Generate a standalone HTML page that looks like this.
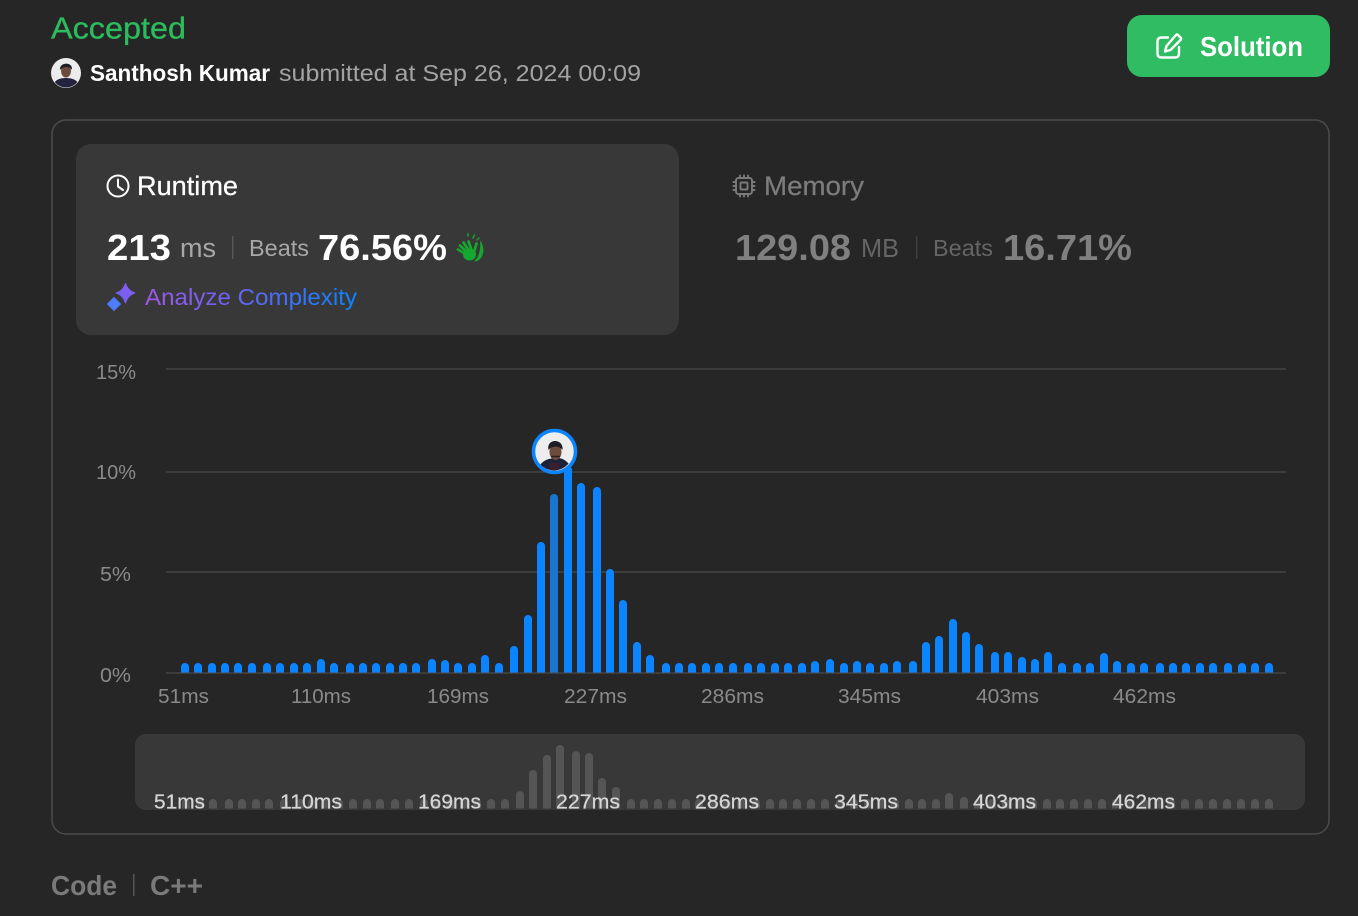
<!DOCTYPE html>
<html lang="en">
<head>
<meta charset="utf-8">
<title>Accepted submission</title>
<style>
html,body{margin:0;padding:0;background:#262626;width:1358px;height:916px;overflow:hidden}
svg{display:block}
text{font-family:"Liberation Sans",sans-serif}
.b{font-weight:700}
.ax{font-size:20.5px;fill:#8a8a8a}
.mi{font-size:20.5px;fill:#d6d6d6;stroke:#d6d6d6;stroke-width:.25px}
</style>
</head>
<body>
<svg width="1358" height="916" viewBox="0 0 1358 916" xmlns="http://www.w3.org/2000/svg">
<defs>
<linearGradient id="g" gradientUnits="userSpaceOnUse" x1="108" y1="0" x2="357" y2="0">
<stop offset="0" stop-color="#b553e8"/><stop offset=".5" stop-color="#6a62ee"/><stop offset="1" stop-color="#0a84ff"/>
</linearGradient>
<linearGradient id="s" gradientUnits="userSpaceOnUse" x1="116" y1="303" x2="135" y2="283">
<stop offset="0" stop-color="#6c62f2"/><stop offset="1" stop-color="#8a5cee"/>
</linearGradient>
<clipPath id="c1"><rect x="160" y="400" width="1130" height="272.5"/></clipPath>
<clipPath id="c2"><rect x="135" y="734" width="1170" height="74.5"/></clipPath>
<clipPath id="a1"><circle cx="554" cy="451.5" r="19"/></clipPath>
<clipPath id="a2"><circle cx="66" cy="73" r="14.5"/></clipPath>
</defs>

<rect width="1358" height="916" fill="#262626"/>

<!-- header -->
<text x="51" y="38.500" font-size="31" fill="#2cbb5d" stroke="#2cbb5d" stroke-width=".35" textLength="135" lengthAdjust="spacingAndGlyphs">Accepted</text>
<circle cx="66" cy="73" r="15" fill="#ececec"/>
<g clip-path="url(#a2)">
<path d="M52 90C53 80 59 78 66 78S79 80 81 90Z" fill="#23233f"/>
<ellipse cx="66" cy="71" rx="5" ry="6.5" fill="#6e4c3c"/>
<path d="M60 70C59 62 73 61 72 70C70 66 63 66 60 70Z" fill="#1e1e26"/>
</g>
<text x="90" y="81" font-size="23.500" class="b" fill="#fff" textLength="180" lengthAdjust="spacingAndGlyphs">Santhosh Kumar</text>
<text x="279" y="81" font-size="23.500" fill="#a3a3a3" textLength="362" lengthAdjust="spacingAndGlyphs">submitted at Sep 26, 2024 00:09</text>

<!-- solution button -->
<rect x="1127" y="15" width="203" height="62" rx="15" fill="#2fbc62"/>
<path d="M1168 37.500H1161.500Q1157.500 37.500 1157.500 41.500V53.500Q1157.500 57.500 1161.500 57.500H1175Q1179 57.500 1179 53.500V47" fill="none" stroke="#fff" stroke-width="2.400" stroke-linecap="round"/>
<path d="M1177.500 34.500L1181 38Q1181.500 39 1180.500 40L1170.500 50L1165 51.500L1166.500 46L1176 35Q1176.800 34 1177.500 34.500Z" fill="none" stroke="#fff" stroke-width="2.400" stroke-linejoin="round"/>
<text x="1200" y="56" font-size="28" class="b" fill="#fff" textLength="103" lengthAdjust="spacingAndGlyphs">Solution</text>

<!-- card -->
<rect x="52" y="120" width="1277" height="714" rx="14" fill="#262626" stroke="#4c4c4c" stroke-width="1.500"/>
<rect x="76" y="144" width="603" height="191" rx="15" fill="#383838"/>

<!-- runtime -->
<circle cx="118" cy="186" r="10.500" fill="none" stroke="#fff" stroke-width="2"/>
<path d="M118 179.500V186.500L123 190" fill="none" stroke="#fff" stroke-width="2" stroke-linecap="round" stroke-linejoin="round"/>
<text x="137" y="195" font-size="27" fill="#fff" stroke="#fff" stroke-width=".25" textLength="101" lengthAdjust="spacingAndGlyphs">Runtime</text>
<text x="107" y="260" font-size="36" class="b" fill="#fff" textLength="64" lengthAdjust="spacingAndGlyphs">213</text>
<text x="180" y="257" font-size="25.500" fill="#a8a8a8" textLength="36" lengthAdjust="spacingAndGlyphs">ms</text>
<rect x="232" y="236" width="1.500" height="23" fill="#575757"/>
<text x="249" y="256" font-size="23.500" fill="#a8a8a8" textLength="60" lengthAdjust="spacingAndGlyphs">Beats</text>
<text x="318" y="260" font-size="36" class="b" fill="#fff" textLength="129" lengthAdjust="spacingAndGlyphs">76.56%</text>

<!-- clap icon -->
<g stroke="#15a82f" fill="none" stroke-linecap="round">
<path d="M466 254L458 249.500M467 252L460 245.500M469 251L463.500 242.500M471.500 250L468.500 241.500" stroke-width="2.700"/>
<path d="M474 252L476.500 243.500" stroke-width="2.700"/>
<path d="M468 236V233.500M473 238L474.500 235M477 240L479 238" stroke-width="1.400"/>
</g>
<ellipse cx="469.500" cy="254.500" rx="6.500" ry="6" fill="#15a82f"/>
<path d="M480 240.500C484 245 485 254 480 259C478 261 476 261.500 474 261.500C479 257 481 250 480 240.500Z" fill="#15a82f"/>

<!-- sparkle -->
<path d="M125.500 283.500C127 288 130 291.500 134.800 293C130 294.500 127 298 125.500 303C124 298 121 294.500 116.200 293C121 291.500 124 288 125.500 283.500Z" fill="url(#s)" stroke="url(#s)" stroke-width="1" stroke-linejoin="round"/>
<path d="M114 297.500L120.500 304L114 310.500L107.500 304Z" fill="#4f7bff" stroke="#4f7bff" stroke-width="1" stroke-linejoin="round"/>
<text x="145" y="305" font-size="23.500" fill="url(#g)" textLength="212" lengthAdjust="spacingAndGlyphs">Analyze Complexity</text>

<!-- memory -->
<g fill="none" stroke="#7a7a7a" stroke-width="1.900">
<rect x="736" y="178" width="16" height="16" rx="2.500"/>
<rect x="740.500" y="182.500" width="7" height="7" rx="1"/>
<path d="M740 175.500V178M744 175.500V178M748 175.500V178M740 194V196.500M744 194V196.500M748 194V196.500M733.500 182H736M733.500 186H736M733.500 190H736M752 182H754.500M752 186H754.500M752 190H754.500" stroke-linecap="round"/>
</g>
<text x="764" y="195" font-size="27" fill="#7c7c7c" stroke="#7c7c7c" stroke-width=".25" textLength="100" lengthAdjust="spacingAndGlyphs">Memory</text>
<text x="735" y="260" font-size="36" class="b" fill="#808080" textLength="116" lengthAdjust="spacingAndGlyphs">129.08</text>
<text x="861" y="257" font-size="25.500" fill="#656565" textLength="38" lengthAdjust="spacingAndGlyphs">MB</text>
<rect x="916" y="236" width="1.500" height="23" fill="#3f3f3f"/>
<text x="933" y="256" font-size="23.500" fill="#656565" textLength="60" lengthAdjust="spacingAndGlyphs">Beats</text>
<text x="1003" y="260" font-size="36" class="b" fill="#808080" textLength="129" lengthAdjust="spacingAndGlyphs">16.71%</text>

<!-- grid -->
<g stroke="#4a4a4a" stroke-width="1.300">
<path d="M166 369H1286M166 472H1286M166 572H1286M166 673H1286"/>
</g>
<text x="96" y="379" class="ax" textLength="40" lengthAdjust="spacingAndGlyphs">15%</text>
<text x="96" y="479" class="ax" textLength="40" lengthAdjust="spacingAndGlyphs">10%</text>
<text x="100" y="581" class="ax" textLength="31" lengthAdjust="spacingAndGlyphs">5%</text>
<text x="100" y="682" class="ax" textLength="31" lengthAdjust="spacingAndGlyphs">0%</text>

<!-- main bars -->
<g clip-path="url(#c1)" fill="none" stroke="#0a84ff" stroke-width="8" stroke-linecap="round">
<path d="M185 667V680M198 667V680M212 667V680M225 667V680M238 667V680M252 667V680M267 667V680M280 667V680M294 667V680M307 667V680M321 663V680M334 667V680M350 667V680M363 667V680M376 667V680M390 667V680M403 667V680M416 667V680M432 663V680M445 664V680M458 667V680M472 667V680M485 659V680M499 667V680M514 650V680M528 619V680M541 546V680M568 470V680M581 487V680M597 491V680M610 573V680M623 604V680M637 646V680M650 659V680M666 667V680M679 667V680M692 667V680M706 667V680M719 667V680M733 667V680M748 667V680M761 667V680M775 667V680M788 667V680M802 667V680M815 665V680M830 663V680M844 667V680M857 665V680M870 667V680M884 667V680M897 665V680M913 665V680M926 646V680M939 640V680M953 623V680M966 636V680M979 648V680M995 656V680M1008 656V680M1022 661V680M1035 663V680M1048 656V680M1062 667V680M1077 667V680M1090 667V680M1104 657V680M1117 665V680M1131 667V680M1144 667V680M1160 667V680M1173 667V680M1186 667V680M1200 667V680M1213 667V680M1228 667V680M1242 667V680M1255 667V680M1269 667V680"/>
<path d="M554 498V680" stroke="#1a75d2"/>
</g>

<!-- avatar marker -->
<circle cx="554.500" cy="451.500" r="21" fill="#ededed" stroke="#0a84ff" stroke-width="3.500"/>
<g clip-path="url(#a1)">
<path d="M538 472C539 462 546 459 554 458S570 461 572 472Z" fill="#1e2238"/>
<path d="M549 463H560L558 472H551Z" fill="#3a1f2e"/>
<ellipse cx="555.500" cy="452" rx="6" ry="8" fill="#6e4c3c"/>
<path d="M548.500 450C546 438 564 438 562.500 450C560 446 552 445 548.500 450Z" fill="#1c1c24"/>
<path d="M551 456.500H560" stroke="#26201f" stroke-width="1.500"/>
</g>

<!-- x labels -->
<text x="158" y="703" class="ax" textLength="51" lengthAdjust="spacingAndGlyphs">51ms</text>
<text x="291" y="703" class="ax" textLength="60" lengthAdjust="spacingAndGlyphs">110ms</text>
<text x="427" y="703" class="ax" textLength="62" lengthAdjust="spacingAndGlyphs">169ms</text>
<text x="564" y="703" class="ax" textLength="63" lengthAdjust="spacingAndGlyphs">227ms</text>
<text x="701" y="703" class="ax" textLength="63" lengthAdjust="spacingAndGlyphs">286ms</text>
<text x="838" y="703" class="ax" textLength="63" lengthAdjust="spacingAndGlyphs">345ms</text>
<text x="976" y="703" class="ax" textLength="63" lengthAdjust="spacingAndGlyphs">403ms</text>
<text x="1113" y="703" class="ax" textLength="63" lengthAdjust="spacingAndGlyphs">462ms</text>

<!-- mini chart -->
<rect x="135" y="734" width="1170" height="76" rx="11" fill="#383838"/>
<g clip-path="url(#c2)" fill="none" stroke="#555" stroke-width="8" stroke-linecap="round">
<path d="M186 803V815M200 803V815M213 803V815M229 803V815M242 803V815M256 803V815M269 803V815M284 803V815M300 803V815M312 803V815M326 803V815M339 803V815M353 803V815M367 803V815M380 803V815M395 803V815M409 803V815M424 803V815M436 803V815M450 803V815M464 803V815M477 803V815M491 803V815M505 803V815M520 795V815M533 774V815M547 759V815M560 749V815M576 755V815M589 757V815M602 782V815M616 791V815M631 803V815M644 803V815M658 803V815M672 803V815M686 803V815M699 803V815M713 803V815M727 803V815M741 803V815M756 803V815M770 803V815M783 803V815M797 803V815M811 803V815M825 803V815M840 803V815M854 803V815M868 803V815M882 803V815M895 803V815M909 803V815M922 803V815M936 803V815M949 797V815M964 801V815M978 803V815M992 803V815M1006 803V815M1019 803V815M1033 803V815M1047 803V815M1060 803V815M1074 803V815M1088 803V815M1102 803V815M1116 803V815M1130 803V815M1144 803V815M1158 803V815M1171 803V815M1185 803V815M1199 803V815M1213 803V815M1227 803V815M1241 803V815M1255 803V815M1269 803V815"/>
</g>
<text x="154" y="808.500" class="mi" textLength="51" lengthAdjust="spacingAndGlyphs">51ms</text>
<text x="280" y="808.500" class="mi" textLength="62" lengthAdjust="spacingAndGlyphs">110ms</text>
<text x="418" y="808.500" class="mi" textLength="63" lengthAdjust="spacingAndGlyphs">169ms</text>
<text x="556" y="808.500" class="mi" textLength="64" lengthAdjust="spacingAndGlyphs">227ms</text>
<text x="695" y="808.500" class="mi" textLength="64" lengthAdjust="spacingAndGlyphs">286ms</text>
<text x="834" y="808.500" class="mi" textLength="64" lengthAdjust="spacingAndGlyphs">345ms</text>
<text x="973" y="808.500" class="mi" textLength="63" lengthAdjust="spacingAndGlyphs">403ms</text>
<text x="1112" y="808.500" class="mi" textLength="63" lengthAdjust="spacingAndGlyphs">462ms</text>

<!-- footer -->
<text x="51" y="895" font-size="27.500" class="b" fill="#7a7a7a" textLength="66" lengthAdjust="spacingAndGlyphs">Code</text>
<rect x="133" y="874" width="1.500" height="22" fill="#555"/>
<text x="150" y="895" font-size="27.500" class="b" fill="#7a7a7a" textLength="53" lengthAdjust="spacingAndGlyphs">C++</text>
</svg>
</body>
</html>
